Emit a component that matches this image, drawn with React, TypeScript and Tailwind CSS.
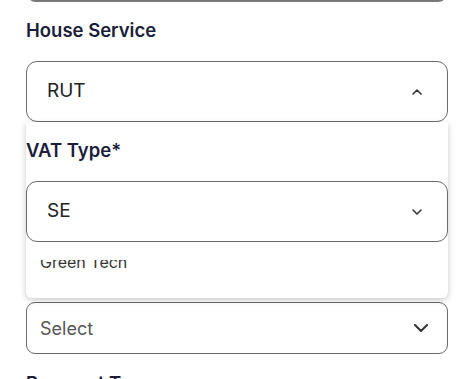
import React from 'react';

const Chevron = ({ up = false, big = false }: { up?: boolean; big?: boolean }) => (
  <svg
    width={big ? 14 : 10}
    height={big ? 8 : 6}
    viewBox={big ? '0 0 14 8' : '0 0 10 6'}
    fill="none"
    stroke="#333"
    strokeWidth={big ? 2 : 1.6}
    strokeLinecap="round"
    strokeLinejoin="round"
  >
    {big ? (
      <path d="M1 1l6 6 6-6" />
    ) : up ? (
      <path d="M1 5l4-4 4 4" />
    ) : (
      <path d="M1 1l4 4 4-4" />
    )}
  </svg>
);

export default function App() {
  return (
    <div className="w-[474px] h-[379px] overflow-hidden bg-white font-['Inter',sans-serif]">
      <div className="px-[26px]">
        {/* bottom edge of the previous field */}
        <div className="-mt-[18px] h-[20px] rounded-[10px] border-2 border-[#7a7a7a]" />

        <div className="pt-[16px] text-[18.5px] leading-[24px] font-semibold text-[#1b1d3b]">
          House Service
        </div>

        <div className="relative mt-[19px]">
          <div className="flex h-[61px] items-center justify-between rounded-[11px] border-[1.5px] border-[#6b6b6b] bg-white pl-[20px] pr-[25px]">
            <span className="text-[19px] text-[#222]">RUT</span>
            <Chevron up />
          </div>

          {/* open option list; the upper options sit behind the VAT field */}
          <div className="absolute left-0 right-0 top-full z-10 rounded-b-[6px] bg-white pb-[16px] pt-[120px] shadow-[0_2px_6px_rgba(0,0,0,0.22)]">
            <div className="flex h-[40px] items-center px-[14px] text-[16px] text-[#333]">
              Green Tech
            </div>
          </div>
        </div>

        <div className="relative z-20 bg-white pb-[18px]">
          <div className="pt-[16px] text-[18.5px] leading-[24px] font-semibold text-[#1b1d3b]">
            VAT Type*
          </div>
          <div className="mt-[19px] flex h-[61px] items-center justify-between rounded-[11px] border-[1.5px] border-[#6b6b6b] bg-white pl-[20px] pr-[25px]">
            <span className="text-[19px] text-[#222]">SE</span>
            <Chevron />
          </div>
        </div>

        <div className="mt-[42px] flex h-[52px] items-center justify-between rounded-[9px] border-[1.5px] border-[#6b6b6b] bg-white pl-[13px] pr-[19px]">
          <span className="text-[18px] text-[#555]">Select</span>
          <Chevron big />
        </div>

        <div className="pt-[17px] text-[18.5px] leading-[24px] font-semibold text-[#1b1d3b]">
          Payment Terms
        </div>
      </div>
    </div>
  );
}
